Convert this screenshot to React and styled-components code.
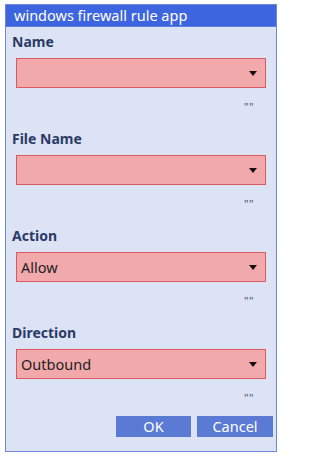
import React from "react";
import styled, { createGlobalStyle } from "styled-components";

const Global = createGlobalStyle`
  html, body { margin: 0; padding: 0; background: #ffffff; }
  body { font-family: "Noto Sans", "Open Sans", sans-serif; }
`;

const Window = styled.div`
  box-sizing: border-box;
  margin: 4px 0 0 5px;
  width: 272px;
  height: 448px;
  border: 1px solid #7088dc;
  background: #dce3f5;
  display: flex;
  flex-direction: column;
`;

const TitleBar = styled.div`
  height: 21px;
  background: #3d65e0;
  color: #ffffff;
  font-size: 14.5px;
  line-height: 21px;
  padding-left: 8px;
  border-bottom: 1px solid #5f7fe0;
`;

const Body = styled.div`
  display: flex;
  flex-direction: column;
  padding: 5px 3px 0 6px;
  flex: 1;
`;

const Section = styled.div`
  display: flex;
  flex-direction: column;
  margin-bottom: ${(p) => (p.$last ? "0" : "13px")};
`;

const Label = styled.div`
  font-size: 14px;
  font-weight: 700;
  line-height: 20px;
  color: #2b3a66;
`;

const Select = styled.div`
  box-sizing: border-box;
  margin: 6px 0 0 4px;
  width: 250px;
  height: 30px;
  border: 1px solid #dc5a5f;
  background: #f1a9ac;
  display: flex;
  align-items: center;
  justify-content: space-between;
  padding: 0 8px 0 4px;
  font-size: 14.5px;
  color: #1e1e1e;
`;

const Arrow = styled.span`
  width: 0;
  height: 0;
  border-left: 4.5px solid transparent;
  border-right: 4.5px solid transparent;
  border-top: 5px solid #111;
`;

const Hint = styled.div`
  margin-top: 10px;
  height: 18px;
  line-height: 18px;
  text-align: right;
  padding-right: 19px;
  font-size: 11px;
  color: #4f5566;
  letter-spacing: 0.5px;
`;

const Buttons = styled.div`
  display: flex;
  justify-content: flex-end;
  gap: 6px;
  margin-top: 9px;
`;

const Button = styled.button`
  width: ${(p) => p.$w}px;
  height: 21px;
  border: none;
  background: #5a7ad4;
  color: #ffffff;
  font-family: "Noto Sans", "Open Sans", sans-serif;
  font-size: 14.5px;
  line-height: 21px;
  padding: 0;
`;

const fields = [
  { label: "Name", value: "" },
  { label: "File Name", value: "" },
  { label: "Action", value: "Allow" },
  { label: "Direction", value: "Outbound" },
];

export default function App() {
  return (
    <>
      <Global />
      <Window>
        <TitleBar>windows firewall rule app</TitleBar>
        <Body>
          {fields.map((f, i) => (
            <Section key={f.label} $last={i === fields.length - 1}>
              <Label>{f.label}</Label>
              <Select>
                <span>{f.value}</span>
                <Arrow />
              </Select>
              <Hint>""</Hint>
            </Section>
          ))}
          <Buttons>
            <Button $w={75}>OK</Button>
            <Button $w={76}>Cancel</Button>
          </Buttons>
        </Body>
      </Window>
    </>
  );
}
